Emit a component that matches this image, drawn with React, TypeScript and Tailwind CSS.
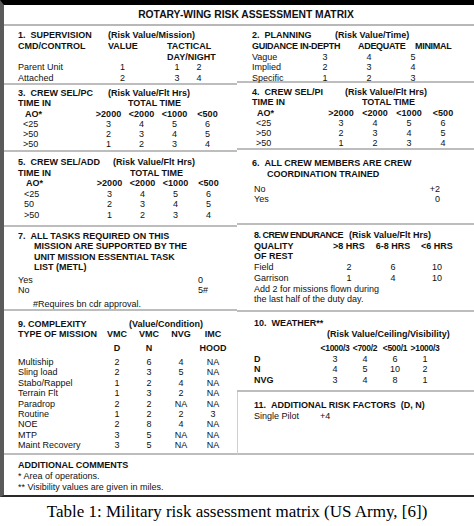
const line = "border-b-2 border-[#bdbdbd]";

function Cells({ values, className }: { values: string[]; className: string }) {
  return (
    <>
      {values.map((v, i) => (
        <span key={i} className={className}>
          {v}
        </span>
      ))}
    </>
  );
}

export default function App() {
  return (
    <div className="w-[474px] h-[526px] bg-white text-[#111] font-['Liberation_Sans',Arial,sans-serif] text-[9px] overflow-hidden">
      <div className="h-[497px] border-t-[5px] border-t-black border-l-4 border-l-[#5a5a5a] border-b-2 border-b-[#2a2a2a] flex flex-col">
        {/* title */}
        <div className="h-[21px] shrink-0 border-b-2 border-[#b8b8b8] flex items-center justify-center pl-[14px] text-[10.3px] font-bold">
          ROTARY-WING RISK ASSESSMENT MATRIX
        </div>

        <div className="flex flex-1 whitespace-nowrap">
          {/* left column */}
          <div className="w-[233px] flex flex-col">
            {/* 1 */}
            <div className={`h-[59px] ${line} pl-[14px] pt-[4px] leading-[10.75px]`}>
              <div className="flex font-bold">
                <span className="w-[90px]">1.&nbsp;&nbsp;SUPERVISION</span>
                <span>(Risk Value/Mission)</span>
              </div>
              <div className="flex font-bold">
                <span className="w-[90px]">CMD/CONTROL</span>
                <span className="w-[59px]">VALUE</span>
                <span>TACTICAL</span>
              </div>
              <div className="flex font-bold">
                <span className="ml-[149px]">DAY/NIGHT</span>
              </div>
              <div className="flex">
                <span className="w-[90px]">Parent Unit</span>
                <span className="w-[29px] text-center">1</span>
                <span className="w-[29px]" />
                <Cells values={["1", "2"]} className="w-[22px] text-center" />
              </div>
              <div className="flex">
                <span className="w-[90px]">Attached</span>
                <span className="w-[29px] text-center">2</span>
                <span className="w-[29px]" />
                <Cells values={["3", "4"]} className="w-[22px] text-center" />
              </div>
            </div>

            {/* 3 */}
            <div className={`h-[67px] ${line} pl-[14px] pt-[3px] leading-[10.3px]`}>
              <div className="flex font-bold">
                <span className="w-[90px]">3.&nbsp;&nbsp;CREW SEL/PC</span>
                <span>(Risk Value/Flt Hrs)</span>
              </div>
              <div className="flex font-bold">
                <span className="w-[110px]">TIME IN</span>
                <span>TOTAL TIME</span>
              </div>
              <div className="flex font-bold">
                <span className="w-[74px] pl-[7px]">AO*</span>
                <Cells values={[">2000", "<2000", "<1000", "<500"]} className="w-[33px] text-center" />
              </div>
              {[
                ["<25", "3", "4", "5", "6"],
                [">50", "2", "3", "4", "5"],
                [">50", "1", "2", "3", "4"],
              ].map((r, i) => (
                <div key={i} className="flex">
                  <span className="w-[74px] pl-[5px]">{r[0]}</span>
                  <Cells values={r.slice(1)} className="w-[33px] text-center" />
                </div>
              ))}
            </div>

            {/* 5 */}
            <div className={`h-[75px] ${line} pl-[14px] pt-[5px] leading-[10.6px]`}>
              <div className="flex font-bold">
                <span className="w-[95px]">5.&nbsp;&nbsp;CREW SEL/ADD</span>
                <span>(Risk Value/Flt Hrs)</span>
              </div>
              <div className="flex font-bold">
                <span className="w-[112px]">TIME IN</span>
                <span>TOTAL TIME</span>
              </div>
              <div className="flex font-bold">
                <span className="w-[75px] pl-[8px]">AO*</span>
                <Cells values={[">2000", "<2000", "<1000", "<500"]} className="w-[33px] text-center" />
              </div>
              {[
                ["<25", "3", "4", "5", "6"],
                ["50", "2", "3", "4", "5"],
                [">50", "1", "2", "3", "4"],
              ].map((r, i) => (
                <div key={i} className="flex">
                  <span className="w-[75px] pl-[6px]">{r[0]}</span>
                  <Cells values={r.slice(1)} className="w-[33px] text-center" />
                </div>
              ))}
            </div>

            {/* 7 */}
            <div className={`h-[84px] ${line} pl-[14px] pt-[4px] leading-[10.3px]`}>
              <div className="font-bold">
                <div>7.&nbsp;&nbsp;ALL TASKS REQUIRED ON THIS</div>
                <div className="pl-[16px]">MISSION ARE SUPPORTED BY THE</div>
                <div className="pl-[16px]">UNIT MISSION ESSENTIAL TASK</div>
                <div className="pl-[16px]">LIST (METL)</div>
              </div>
              <div className="flex mt-[3px]">
                <span className="w-[180px]">Yes</span>
                <span>0</span>
              </div>
              <div className="flex">
                <span className="w-[180px]">No</span>
                <span>5#</span>
              </div>
              <div className="pl-[15px] mt-[3px]">#Requires bn cdr approval.</div>
            </div>

            {/* 9 */}
            <div className={`h-[144px] ${line} pl-[14px] pt-[8px] leading-[10.3px]`}>
              <div className="flex font-bold">
                <span className="w-[111px]">9. COMPLEXITY</span>
                <span>(Value/Condition)</span>
              </div>
              <div className="flex font-bold">
                <span className="w-[83px]">TYPE OF MISSION</span>
                <Cells values={["VMC", "VMC", "NVG", "IMC"]} className="w-[32px] text-center" />
              </div>
              <div className="flex font-bold mt-[3px]">
                <span className="w-[83px]" />
                <Cells values={["D", "N", "", "HOOD"]} className="w-[32px] text-center" />
              </div>
              <div className="mt-[4px] leading-[10.4px]">
                {[
                  ["Multiship", "2", "6", "4", "NA"],
                  ["Sling load", "2", "3", "5", "NA"],
                  ["Stabo/Rappel", "1", "2", "4", "NA"],
                  ["Terrain Flt", "1", "3", "2", "NA"],
                  ["Paradrop", "2", "2", "NA", "NA"],
                  ["Routine", "1", "2", "2", "3"],
                  ["NOE", "2", "8", "4", "NA"],
                  ["MTP", "3", "5", "NA", "NA"],
                  ["Maint Recovery", "3", "5", "NA", "NA"],
                ].map((r, i) => (
                  <div key={i} className="flex">
                    <span className="w-[83px]">{r[0]}</span>
                    <Cells values={r.slice(1)} className="w-[32px] text-center" />
                  </div>
                ))}
              </div>
            </div>

            {/* comments */}
            <div className="flex-1 pl-[14px] pt-[5px] leading-[11px]">
              <div className="font-bold">ADDITIONAL COMMENTS</div>
              <div>* Area of operations.</div>
              <div>** Visibility values are given in miles.</div>
            </div>
          </div>

          {/* right column */}
          <div className="w-[237px] flex flex-col">
            {/* 2 */}
            <div className={`h-[57px] ${line} pl-[15px] pt-[4px] leading-[10.75px]`}>
              <div className="flex font-bold">
                <span className="w-[83px]">2.&nbsp;&nbsp;PLANNING</span>
                <span>(Risk Value/Time)</span>
              </div>
              <div className="flex font-bold tracking-[-0.3px]">
                <span className="w-[48px]">GUIDANCE</span>
                <span className="w-[58px]">IN-DEPTH</span>
                <span className="w-[57px]">ADEQUATE</span>
                <span>MINIMAL</span>
              </div>
              {[
                ["Vague", "3", "4", "5"],
                ["Implied", "2", "3", "4"],
                ["Specific", "1", "2", "3"],
              ].map((r, i) => (
                <div key={i} className="flex">
                  <span className="w-[51px]">{r[0]}</span>
                  <Cells values={r.slice(1)} className="w-[44px] text-center" />
                </div>
              ))}
            </div>

            {/* 4 */}
            <div className={`h-[67px] ${line} pl-[15px] pt-[4px] leading-[10.3px]`}>
              <div className="flex font-bold">
                <span className="w-[93px]">4.&nbsp;&nbsp;CREW SEL/PI</span>
                <span>(Risk Value/Flt Hrs)</span>
              </div>
              <div className="flex font-bold">
                <span className="w-[110px]">TIME IN</span>
                <span>TOTAL TIME</span>
              </div>
              <div className="flex font-bold">
                <span className="w-[72px] pl-[5px]">AO*</span>
                <Cells values={[">2000", "<2000", "<1000", "<500"]} className="w-[34px] text-center" />
              </div>
              {[
                ["<25", "3", "4", "5", "6"],
                [">50", "2", "3", "4", "5"],
                [">50", "1", "2", "3", "4"],
              ].map((r, i) => (
                <div key={i} className="flex">
                  <span className="w-[72px] pl-[4px]">{r[0]}</span>
                  <Cells values={r.slice(1)} className="w-[34px] text-center" />
                </div>
              ))}
            </div>

            {/* 6 */}
            <div className={`h-[75px] ${line} pl-[15px] pr-[34px] pt-[8px] leading-[10.5px]`}>
              <div className="font-bold">
                <div>6.&nbsp;&nbsp;ALL CREW MEMBERS ARE CREW</div>
                <div className="pl-[15px]">COORDINATION TRAINED</div>
              </div>
              <div className="flex justify-between mt-[4.5px] pl-[2px]">
                <span>No</span>
                <span>+2</span>
              </div>
              <div className="flex justify-between pl-[2px]">
                <span>Yes</span>
                <span>0</span>
              </div>
            </div>

            {/* 8 */}
            <div className={`h-[87px] ${line} pl-[17px] pt-[5px] leading-[10.7px]`}>
              <div className="flex font-bold">
                <span className="w-[95px] tracking-[-0.5px]">8. CREW ENDURANCE</span>
                <span>(Risk Value/Flt Hrs)</span>
              </div>
              <div className="flex font-bold">
                <span className="w-[73px]">QUALITY</span>
                <Cells values={[">8 HRS", "6-8 HRS", "<6 HRS"]} className="w-[44px] text-center" />
              </div>
              <div className="font-bold">OF REST</div>
              {[
                ["Field", "2", "6", "10"],
                ["Garrison", "1", "4", "10"],
              ].map((r, i) => (
                <div key={i} className="flex">
                  <span className="w-[73px]">{r[0]}</span>
                  <Cells values={r.slice(1)} className="w-[44px] text-center" />
                </div>
              ))}
              <div>Add 2 for missions flown during</div>
              <div>the last half of the duty day.</div>
            </div>

            {/* 10 */}
            <div className={`h-[80px] ${line} pl-[17px] pt-[6px] leading-[10.5px]`}>
              <div className="font-bold">10.&nbsp;&nbsp;WEATHER**</div>
              <div className="font-bold pl-[73px]">(Risk Value/Ceiling/Visibility)</div>
              <div className="flex font-bold mt-[4px] text-[8.5px] tracking-[-0.3px]">
                <span className="w-[66px]" />
                <Cells values={["<1000/3", "<700/2", "<500/1", ">1000/3"]} className="w-[30px] text-center" />
              </div>
              {[
                ["D", "3", "4", "6", "1"],
                ["N", "4", "5", "10", "2"],
                ["NVG", "3", "4", "8", "1"],
              ].map((r, i) => (
                <div key={i} className="flex">
                  <span className="w-[66px] font-bold">{r[0]}</span>
                  <Cells values={r.slice(1)} className="w-[30px] text-center" />
                </div>
              ))}
            </div>

            {/* 11 */}
            <div className={`h-[63px] ${line} border-l border-l-[#d0d0d0] pl-[16px] pt-[8px] leading-[10.5px]`}>
              <div className="font-bold">11.&nbsp;&nbsp;ADDITIONAL RISK FACTORS&nbsp;&nbsp;(D, N)</div>
              <div className="flex">
                <span className="w-[66px]">Single Pilot</span>
                <span>+4</span>
              </div>
            </div>
          </div>
        </div>
      </div>

      <div className="h-[29px] flex items-center justify-center font-['Liberation_Serif',serif] text-[17px] text-black">
        Table 1: Military risk assessment matrix (US Army, [6])
      </div>
    </div>
  );
}
